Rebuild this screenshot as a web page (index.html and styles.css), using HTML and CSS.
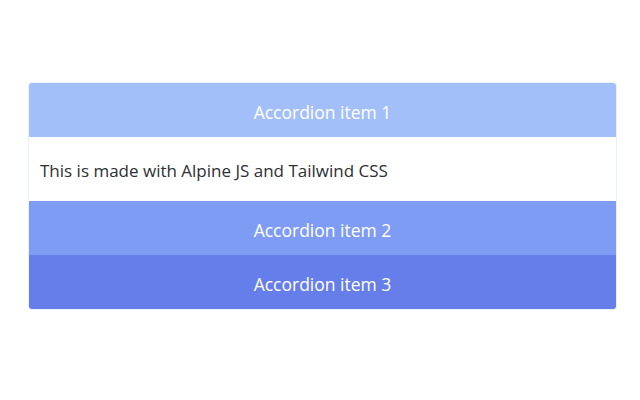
FILE: index.html
```html
<!DOCTYPE html>
<html lang="en">
<head>
<meta charset="utf-8">
<title>Accordion</title>
<link rel="stylesheet" href="styles.css">
</head>
<body>
  <div class="page">
    <div class="accordion">
      <div class="item">
        <button class="item-head tone-1">Accordion item 1</button>
        <div class="item-body">This is made with Alpine JS and Tailwind CSS</div>
      </div>
      <div class="item">
        <button class="item-head tone-2">Accordion item 2</button>
      </div>
      <div class="item">
        <button class="item-head tone-3">Accordion item 3</button>
      </div>
    </div>
  </div>
</body>
</html>
```
FILE: styles.css
```css
html, body {
  margin: 0;
  padding: 0;
  background: #ffffff;
}

body {
  font-family: "Open Sans", "Noto Sans", sans-serif;
  font-size: 17px;
  color: #2d3748;
}

.page {
  padding: 82px 23px 0 28px;
}

.accordion {
  border: 1px solid #ebf0fb;
  border-radius: 4px;
  overflow: hidden;
  display: flex;
  flex-direction: column;
}

.item-head {
  display: block;
  width: 100%;
  height: 54px;
  border: 0;
  margin: 0;
  padding: 3px 0 0;
  font: inherit;
  font-size: 17.5px;
  color: #ffffff;
  text-align: center;
  cursor: pointer;
}

.tone-1 { background: #a3bffa; }
.tone-2 { background: #7f9cf5; }
.tone-3 { background: #667eea; }

.item-body {
  height: 64px;
  box-sizing: border-box;
  padding: 3px 11px 0;
  display: flex;
  align-items: center;
  background: #ffffff;
  color: #2d2f33;
}
```
